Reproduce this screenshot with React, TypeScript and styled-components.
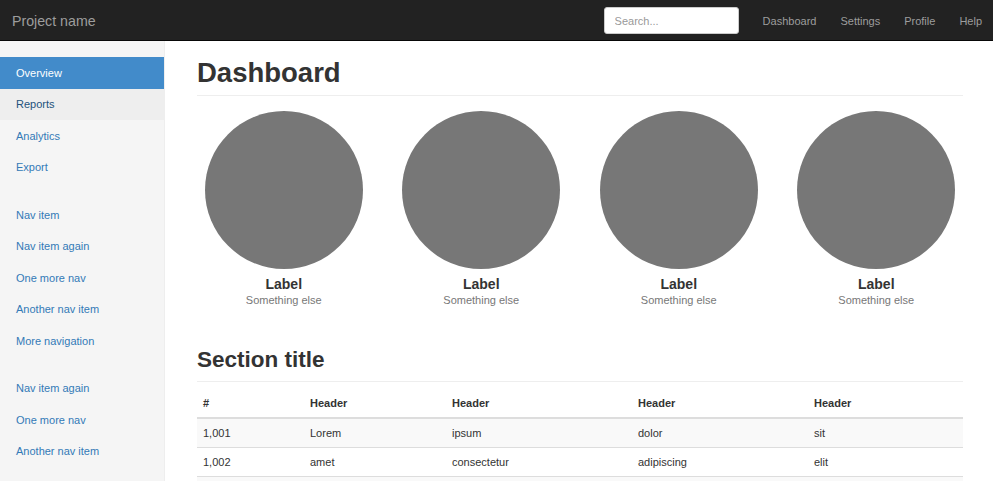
import React from "react";
import styled, { createGlobalStyle } from "styled-components";

const GlobalStyle = createGlobalStyle`
  * { box-sizing: border-box; }
  html, body { margin: 0; padding: 0; height: 100%; }
  body {
    font-family: "Liberation Sans", Arial, sans-serif;
    font-size: 11px;
    line-height: 16px;
    color: #333;
    background: #fff;
    overflow: hidden;
  }
`;

const sideGroups = [
  ["Overview", "Reports", "Analytics", "Export"],
  ["Nav item", "Nav item again", "One more nav", "Another nav item", "More navigation"],
  ["Nav item again", "One more nav", "Another nav item"],
];

const topLinks = ["Dashboard", "Settings", "Profile", "Help"];

const columns = [107, 142, 186, 176, 155];

const rows = [
  ["1,001", "Lorem", "ipsum", "dolor", "sit"],
  ["1,002", "amet", "consectetur", "adipiscing", "elit"],
  ["1,003", "Integer", "nec", "odio", "Praesent"],
];

export default function App() {
  return (
    <>
      <GlobalStyle />
      <Page>
        <Navbar>
          <Brand>Project name</Brand>
          <NavRight>
            <SearchForm>
              <SearchInput placeholder="Search..." />
            </SearchForm>
            <TopNav>
              {topLinks.map((l) => (
                <TopLink key={l}>{l}</TopLink>
              ))}
            </TopNav>
          </NavRight>
        </Navbar>
        <Body>
          <Sidebar>
            {sideGroups.map((group, gi) => (
              <SideList key={gi}>
                {group.map((item, i) => (
                  <SideItem
                    key={item + i}
                    $active={gi === 0 && i === 0}
                    $hover={gi === 0 && i === 1}
                  >
                    {item}
                  </SideItem>
                ))}
              </SideList>
            ))}
          </Sidebar>
          <Main>
            <PageHeader>Dashboard</PageHeader>
            <Placeholders>
              {[0, 1, 2, 3].map((i) => (
                <Placeholder key={i}>
                  <Circle />
                  <Label>Label</Label>
                  <Muted>Something else</Muted>
                </Placeholder>
              ))}
            </Placeholders>
            <SubHeader>Section title</SubHeader>
            <Table>
              <colgroup>
                {columns.map((w, i) => (
                  <Col key={i} $w={w} />
                ))}
              </colgroup>
              <thead>
                <tr>
                  <Th>#</Th>
                  <Th>Header</Th>
                  <Th>Header</Th>
                  <Th>Header</Th>
                  <Th>Header</Th>
                </tr>
              </thead>
              <tbody>
                {rows.map((r, ri) => (
                  <Tr key={ri} $striped={ri % 2 === 0}>
                    {r.map((c, ci) => (
                      <Td key={ci}>{c}</Td>
                    ))}
                  </Tr>
                ))}
              </tbody>
            </Table>
          </Main>
        </Body>
      </Page>
    </>
  );
}

const Page = styled.div`
  height: 100vh;
  display: flex;
  flex-direction: column;
`;

const Navbar = styled.header`
  height: 41px;
  flex-shrink: 0;
  background: #222;
  border-bottom: 1px solid #080808;
  display: flex;
  align-items: center;
  justify-content: space-between;
  padding: 1px 0 0 12px;
`;

const Brand = styled.span`
  font-size: 14.2px;
  color: #9d9d9d;
`;

const NavRight = styled.div`
  display: flex;
  align-items: center;
  height: 100%;
  margin-right: -1px;
`;

const SearchForm = styled.form`
  padding: 0 12px;
  display: flex;
  align-items: center;
`;

const SearchInput = styled.input`
  width: 135px;
  height: 27px;
  border: 1px solid #ccc;
  border-radius: 3px;
  background: #fff;
  padding: 0 10px;
  font-family: "Liberation Sans", Arial, sans-serif;
  font-size: 11px;
  color: #555;
  outline: none;
  &::placeholder {
    color: #999;
  }
`;

const TopNav = styled.nav`
  display: flex;
  height: 100%;
`;

const TopLink = styled.a`
  display: flex;
  align-items: center;
  padding: 0 12px;
  font-size: 11px;
  color: #9d9d9d;
  cursor: pointer;
`;

const Body = styled.div`
  flex: 1;
  display: flex;
  min-height: 0;
`;

const Sidebar = styled.aside`
  width: 165px;
  flex-shrink: 0;
  background: #f5f5f5;
  border-right: 1px solid #eee;
  padding-top: 16px;
`;

const SideList = styled.ul`
  list-style: none;
  margin: 0 0 16px;
  padding: 0;
`;

const SideItem = styled.li<{ $active?: boolean; $hover?: boolean }>`
  height: 31.5px;
  display: flex;
  align-items: center;
  padding-left: 16px;
  font-size: 11px;
  color: ${(p) => (p.$active ? "#fff" : p.$hover ? "#23527c" : "#337ab7")};
  background: ${(p) => (p.$active ? "#428bca" : p.$hover ? "#eee" : "transparent")};
  cursor: pointer;
`;

const Main = styled.main`
  flex: 1;
  padding: 16px 30px 0 32px;
  min-width: 0;
`;

const PageHeader = styled.h1`
  margin: 0 0 15px;
  padding-bottom: 7px;
  border-bottom: 1px solid #eee;
  font-size: 27.5px;
  line-height: 31px;
  font-weight: 700;
  color: #333;
`;

const Placeholders = styled.div`
  display: grid;
  grid-template-columns: repeat(4, 1fr);
  column-gap: 24px;
  margin: 0 -12px 0;
  padding: 0 12px;
  text-align: center;
`;

const Placeholder = styled.div`
  display: flex;
  flex-direction: column;
  align-items: center;
`;

const Circle = styled.div`
  width: 158px;
  height: 158px;
  border-radius: 50%;
  background: #777;
`;

const Label = styled.h4`
  margin: 7px 0 0;
  font-size: 14px;
  line-height: 16px;
  font-weight: 700;
  color: #333;
`;

const Muted = styled.span`
  font-size: 11px;
  line-height: 16px;
  color: #777;
`;

const SubHeader = styled.h2`
  margin: 39px 0 7px;
  padding-bottom: 8px;
  border-bottom: 1px solid #eee;
  font-size: 22.5px;
  line-height: 26px;
  font-weight: 700;
  color: #333;
`;

const Table = styled.table`
  width: 100%;
  border-collapse: collapse;
  table-layout: fixed;
`;

const Col = styled.col<{ $w: number }>`
  width: ${(p) => p.$w}px;
`;

const Th = styled.th`
  text-align: left;
  font-weight: 700;
  font-size: 11px;
  line-height: 16px;
  padding: 6px;
  border-bottom: 2px solid #ddd;
`;

const Tr = styled.tr<{ $striped?: boolean }>`
  background: ${(p) => (p.$striped ? "#f9f9f9" : "#fff")};
`;

const Td = styled.td`
  font-size: 11px;
  line-height: 16px;
  padding: 6px;
  border-top: 1px solid #ddd;
`;
